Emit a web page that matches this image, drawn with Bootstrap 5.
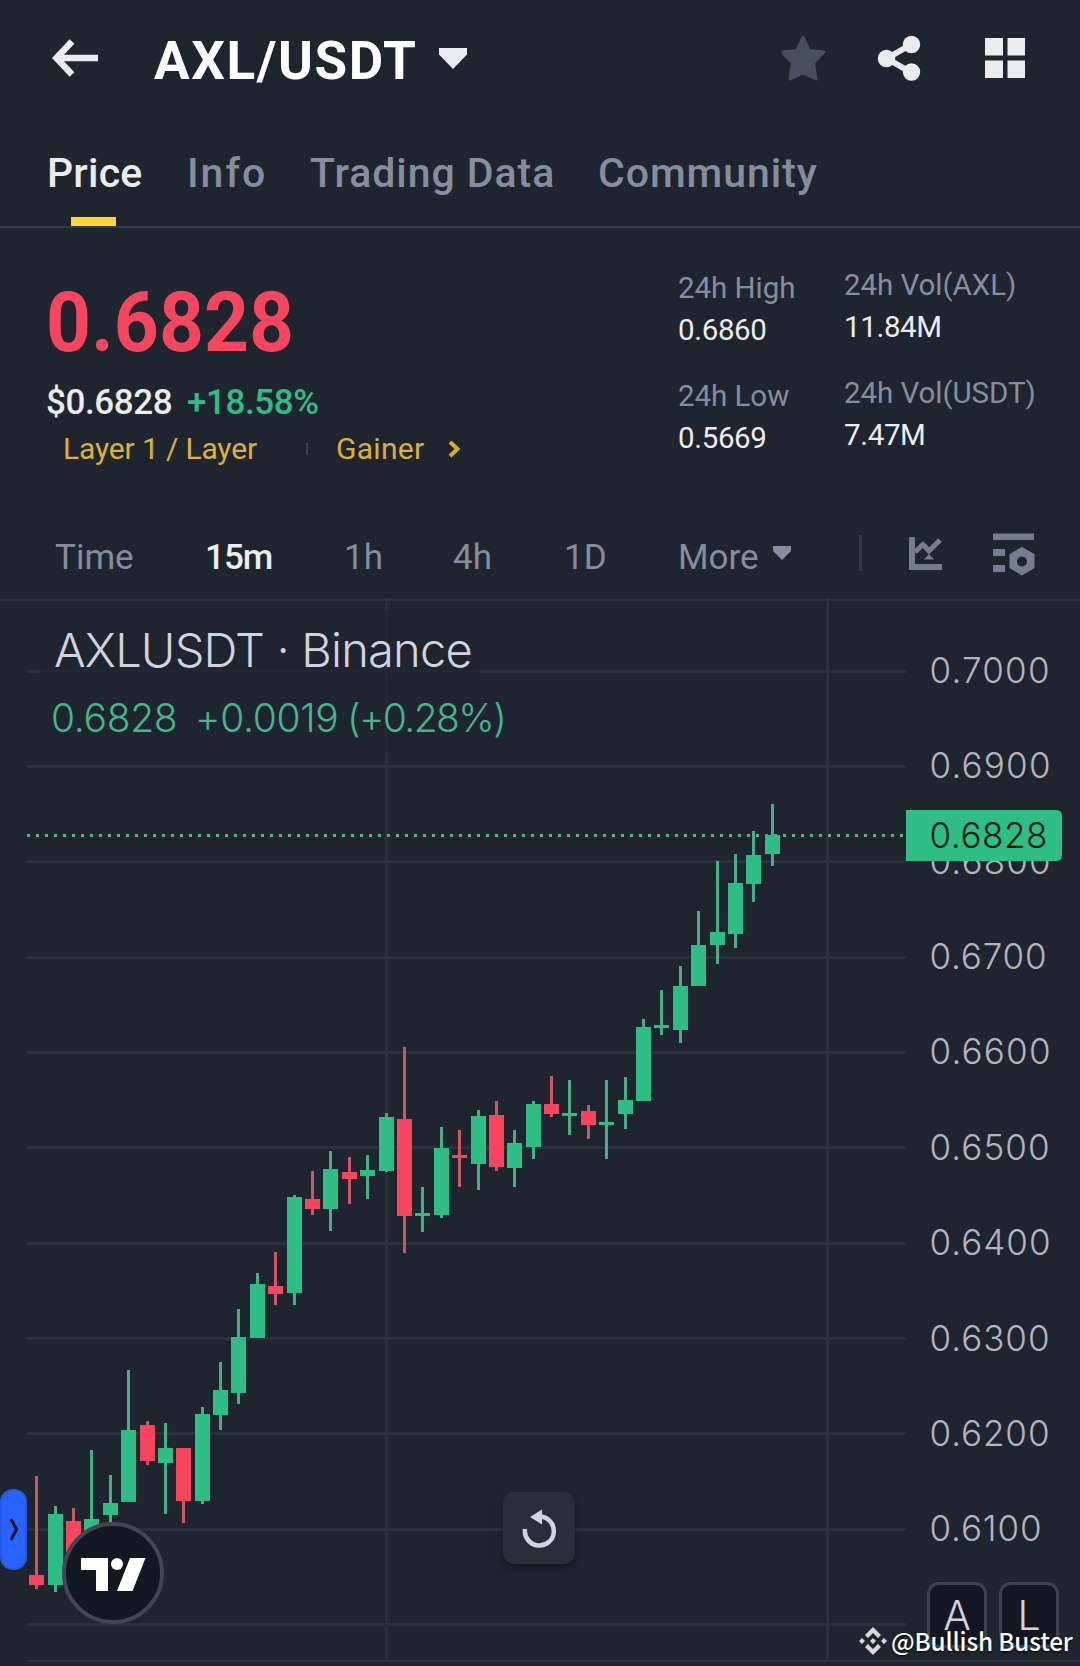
<!DOCTYPE html>
<html lang="en">
<head>
<meta charset="utf-8">
<meta name="viewport" content="width=device-width, initial-scale=1">
<title>AXL/USDT</title>
<link href="https://cdn.jsdelivr.net/npm/bootstrap@5.3.0/dist/css/bootstrap.min.css" rel="stylesheet">
<style>
  :root { --bg:#1f252f; --dim:#848e9c; --up:#2ebd85; --down:#f6465d; --lite:#eaecef; }
  body { background:var(--bg); color:var(--lite); font-family:Roboto,"Liberation Sans",sans-serif; width:1080px; height:1666px; overflow:hidden; }
  svg { display:block; flex:none; }
  .topbar { height:142px; padding:0 55px 26px 52px; }
  .pair { font-size:53px; font-weight:700; line-height:60px; margin-left:56px; padding-top:5px; letter-spacing:1.6px; color:#fff; width:285px; white-space:nowrap; }
  .share-icon { margin-right:63px; }
  .tabs { height:86px; border-bottom:2px solid #333a45; display:grid; grid-template-columns:140px 123px 288px 300px; padding-left:47px; }
  .tabs .nav-link { color:var(--dim); font-size:41px; font-weight:500; line-height:62px; letter-spacing:.95px; position:relative; white-space:nowrap; }
  .tabs .nav-link.info { letter-spacing:2px; }
  .tabs .nav-link.active { color:var(--lite); letter-spacing:.2px; }
  .tabs .nav-link.active::after { content:""; position:absolute; left:24px; bottom:0; width:45px; height:9px; background:#fcd535; }
  .summary { height:292px; padding:44px 0 0 46px; display:grid; grid-template-columns:632px 166px 236px; }
  .last { font-size:84px; font-weight:700; line-height:102px; height:110px; color:var(--down); transform:scaleX(.935); transform-origin:0 0; }
  .usd { font-size:35px; font-weight:500; line-height:42px; height:49px; letter-spacing:-.4px; }
  .usd .fiat { width:141px; }
  .usd .rise { color:var(--up); }
  .tags { font-size:30px; line-height:36px; color:#dcb136; padding-left:17px; height:36px; letter-spacing:-.15px; }
  .tags .sector { width:243px; }
  .tags .gain { width:112px; margin-left:28px; letter-spacing:.3px; }
  .stat { font-size:29.5px; line-height:42px; height:108px; white-space:nowrap; letter-spacing:-.35px; position:relative; }
  .stat span { color:var(--dim); display:block; letter-spacing:-.05px; }
  .ranges { margin:-5px 0 0 0; }
  .vols { margin:-8px 0 0 0; }
  .intervals { height:78px; color:var(--dim); font-size:35px; display:grid; grid-template-columns:150px 139px 109px 111px 114px 95px 86px 50px 84px 50px; padding-left:55px; line-height:76px; white-space:nowrap; }
  .intervals b { color:var(--lite); font-weight:500; letter-spacing:-1px; }
  .intervals svg { margin-top:2px; }
  .intervals .caret { margin-top:26px; }
  .chart { height:1068px; }
  .chart text, .legend { font-family:Inter,"Liberation Sans",sans-serif; font-weight:300; }
  .legend { left:40px; top:12px; width:440px; height:142px; background:rgba(31,37,47,.75); white-space:nowrap; padding:11px 0 0 14px; }
  .sym { font-size:47px; line-height:58px; color:#d1d4dc; letter-spacing:-.8px; }
  .chg { font-size:39px; line-height:78px; color:#45b58b; margin-left:-3px; letter-spacing:-.3px; }
  .chg span { flex:none; }
  .chg .now { width:144px; }
  .chg .diff { width:152px; letter-spacing:-.3px; }
  .chg .pct { letter-spacing:-1.6px; }
  .reset { left:503px; top:894px; width:72px; height:72px; border-radius:11px; background:#2a2e39; box-shadow:0 4px 8px rgba(0,0,0,.4); }
  .handle { left:0; top:891px; width:27px; height:81px; border-radius:13px; background:#2962ff; border:2px solid #2457e6; }
  .tv { left:62px; top:924px; width:102px; height:102px; border-radius:50%; background:#131722; border:4px solid #434651; }
  .keys { left:927px; top:984px; gap:12px; }
  .keys span { width:60px; height:66px; border:3px solid #3e424d; border-radius:12px; background:#131722; display:block; font:300 41px/60px Inter,sans-serif; text-align:center; color:#d1d4dc; }
  .sig { left:859px; top:1025px; gap:4px; color:#fff; font:500 24.300px/36px "Noto Sans CJK SC","Noto Sans",sans-serif; letter-spacing:-.15px; text-shadow:0 1px 2px #000; white-space:nowrap; }
</style>
</head>
<body>
<header class="topbar d-flex align-items-center">
  <svg width="46" height="38" viewBox="0 0 46 38"><path d="M46 19H6M20 2.500L4.500 19L20 35.500" fill="none" stroke="#eaecef" stroke-width="6.500"/></svg>
  <div class="pair">AXL/USDT</div>
  <svg width="28" height="21" viewBox="0 0 28 21"><path d="M0 0H28V6.500L14 21L0 6.500Z" fill="#eaecef"/></svg>
  <div class="d-flex align-items-center ms-auto">
    <svg class="me-5" width="46" height="46" viewBox="0 0 46 46"><path d="M21 2L27 15.500L42 17L31.500 28L34 44L21 38L8 44L10.500 28L0 17L15 15.500Z" fill="#474f5e" stroke="#474f5e" stroke-width="3" stroke-linejoin="round"/></svg>
    <svg class="share-icon" width="46" height="46" viewBox="0 0 46 46"><path d="M35 9.500L11 23.500L35 37.500" fill="none" stroke="#eaecef" stroke-width="6"/><circle cx="35.500" cy="9.500" r="8.700" fill="#eaecef"/><circle cx="10.500" cy="23.500" r="8.700" fill="#eaecef"/><circle cx="35.500" cy="37" r="8.700" fill="#eaecef"/></svg>
    <svg width="40" height="40" viewBox="0 0 40 40"><path d="M0 0H18V17.500H0ZM22.500 0H40V17.500H22.500ZM0 22.500H18V40H0ZM22.500 22.500H40V40H22.500Z" fill="#eaecef"/></svg>
  </div>
</header>

<nav class="tabs">
  <a class="nav-link p-0 active">Price</a><a class="nav-link p-0 info">Info</a><a class="nav-link p-0">Trading Data</a><a class="nav-link p-0">Community</a>
</nav>

<section class="summary">
  <div>
    <div class="last">0.6828</div>
    <div class="usd d-flex"><span class="fiat">$0.6828</span><span class="rise">+18.58%</span></div>
    <div class="tags d-flex align-items-center"><span class="sector">Layer 1 / Layer</span><svg width="2" height="12"><rect width="2" height="12" fill="#3b424e"/></svg><span class="gain">Gainer</span><svg width="13" height="18" viewBox="0 0 13 18"><path d="M2 2L9.500 9L2 16" fill="none" stroke="#dcab28" stroke-width="4"/></svg></div>
  </div>
  <div class="ranges">
    <div class="stat"><span>24h High</span>0.6860</div>
    <div class="stat"><span>24h Low</span>0.5669</div>
  </div>
  <div class="vols">
    <div class="stat"><span>24h Vol(AXL)</span>11.84M</div>
    <div class="stat"><span>24h Vol(USDT)</span>7.47M</div>
  </div>
</section>

<div class="intervals">
  <span>Time</span><b>15m</b><span>1h</span><span>4h</span><span>1D</span><span>More</span>
  <svg class="caret" width="18" height="15" viewBox="0 0 18 15"><path d="M0 0H18V5L9 14L0 5Z" fill="#848e9c"/></svg>
  <svg width="3" height="60"><rect y="13" width="3" height="36" fill="#333a45"/></svg>
  <svg width="34" height="60" viewBox="0 0 34 60"><path d="M0 15H6V42H33V48H0Z" fill="#757e8e"/><path d="M6 30L14 22.500L20 29L31 18" fill="none" stroke="#757e8e" stroke-width="5"/><path d="M20 32L25 37.500H15Z" fill="#757e8e"/></svg>
  <svg width="42" height="60" viewBox="0 0 42 60"><path d="M0 11.500H41V18H0ZM0 27H12V34H0ZM0 43H12V50H0Z" fill="#757e8e"/><path fill-rule="evenodd" d="M29 25L41.500 32V46L29 53.500L16.500 46V32ZM29 34.500a5 5 0 1 0 .01 0Z" fill="#757e8e"/></svg>
</div>

<main class="chart position-relative">
  <svg id="plot" width="1080" height="1068" viewBox="0 598 1080 1068"></svg>
  <div class="legend position-absolute">
    <div class="sym">AXLUSDT · Binance</div>
    <div class="chg d-flex"><span class="now">0.6828</span><span class="diff">+0.0019</span><span class="pct">(+0.28%)</span></div>
  </div>
  <div class="handle position-absolute"><svg width="23" height="77" viewBox="0 0 23 77"><path d="M9 28L14.500 38.500L9 49" fill="none" stroke="#131722" stroke-width="3"/></svg></div>
  <div class="tv position-absolute"><svg width="94" height="94" viewBox="66 1526 94 94"><path d="M81 1558H108V1591H96V1570H81ZM130 1558H145.500L132.500 1591H117Z" fill="#fff"/><circle cx="117" cy="1564" r="6" fill="#fff"/></svg></div>
  <div class="reset position-absolute"><svg width="72" height="72" viewBox="0 0 72 72"><path d="M22 37A14.500 14.500 0 1 0 36.500 24.500" fill="none" stroke="#d1d4dc" stroke-width="4.500"/><path d="M27 25L39 17.500V32.500Z" fill="#d1d4dc"/></svg></div>
  <div class="keys position-absolute d-flex"><span>A</span><span>L</span></div>
  <div class="sig position-absolute d-flex align-items-center"><svg width="28" height="28" viewBox="0 0 28 28"><path d="M14 0L22 8L19 11L14 6L9 11L6 8ZM14 28L22 20L19 17L14 22L9 17L6 20ZM14 11L17 14L14 17L11 14ZM3 11L6 14L3 17L0 14ZM25 11L28 14L25 17L22 14Z" fill="#d9d9d9"/></svg><span>@Bullish Buster</span></div>
</main>
<script src="https://cdn.jsdelivr.net/npm/bootstrap@5.3.0/dist/js/bootstrap.bundle.min.js"></script>
<script>
  // [x, bodyTop, bodyBottom, wickTop, wickBottom, falling]
  const candles = [
    [29,1575,1585,1476,1589,1],[48,1514,1585,1506,1592],[66,1521,1560,1508,1560,1],[84,1519,1540,1450,1540],
    [103,1503,1515,1475,1530],[121,1430,1502,1370,1502],[140,1425,1461,1421,1465,1],[158,1448,1463,1423,1514],
    [176,1448,1501,1448,1523,1],[195,1414,1501,1407,1504],[213,1390,1415,1362,1430],[231,1337,1393,1309,1404],
    [250,1284,1338,1273,1338],[268,1286,1294,1252,1305,1],[287,1197,1293,1195,1305],[305,1199,1209,1171,1215,1],
    [323,1169,1209,1151,1231],[342,1172,1179,1157,1204,1],[360,1170,1176,1155,1199],[379,1117,1171,1113,1172],
    [397,1119,1216,1047,1253,1],[415,1213,1216,1187,1232],[434,1148,1215,1127,1218],[452,1155,1158,1130,1187,1],
    [471,1116,1164,1110,1190],[489,1115,1167,1101,1171,1],[507,1143,1168,1130,1187],[526,1104,1147,1101,1159],
    [544,1104,1114,1076,1117,1],[562,1113,1116,1080,1135],[581,1111,1125,1105,1139,1],[599,1122,1125,1080,1159],
    [618,1100,1114,1077,1129],[636,1027,1101,1019,1101],[654,1025,1028,990,1035],[673,986,1030,966,1043],
    [691,945,986,911,986],[710,932,945,861,964],[728,883,934,854,948],[746,855,884,831,902],[765,835,854,804,866]
  ];
  const rect = (x, y, w, h, fill, more = '') => `<rect x="${x}" y="${y}" width="${w}" height="${h}" fill="${fill}" ${more}/>`;
  const label = (y, t, w, fill) => `<text x="929.5" y="${y}" font-size="35" textLength="${w}" fill="${fill}">${t}</text>`;
  const grid = '#2b313b';
  let s = rect(0, 599, 1080, 2, grid) + rect(27, 1660, 1053, 2, grid);
  const widths = [120,121,121,117,121,120,121,120,120,112];
  for (let i = 0; i < 11; i++) {
    const y = 671 + i * 95.37;
    s += rect(27, Math.floor(y) - 1, 879, 3, grid);
    if (i < 10) s += label(y + 12, (0.7 - i / 100).toFixed(4), widths[i], '#b2b5be');
  }
  s += rect(385, 598, 3, 1063, grid) + rect(826, 598, 3, 1063, grid);
  s += `<path d="M27 835.500H906" stroke="#4db391" stroke-width="3" stroke-dasharray="3 6"/>`;
  for (const [x, t, b, wt, wb, down] of candles)
    s += rect(x + 6, wt, 3, wb - wt, down ? '#cc5669' : '#48ae88') + rect(x, t, 15, b - t, down ? '#f6465d' : '#2ebd85');
  s += '<path d="M906 810H1056Q1062 810 1062 816V855Q1062 861 1056 861H906Z" fill="#2ebd85"/>' + label(848, '0.6828', 118, '#0d1a14');
  document.getElementById('plot').innerHTML = s;
</script>
</body>
</html>
